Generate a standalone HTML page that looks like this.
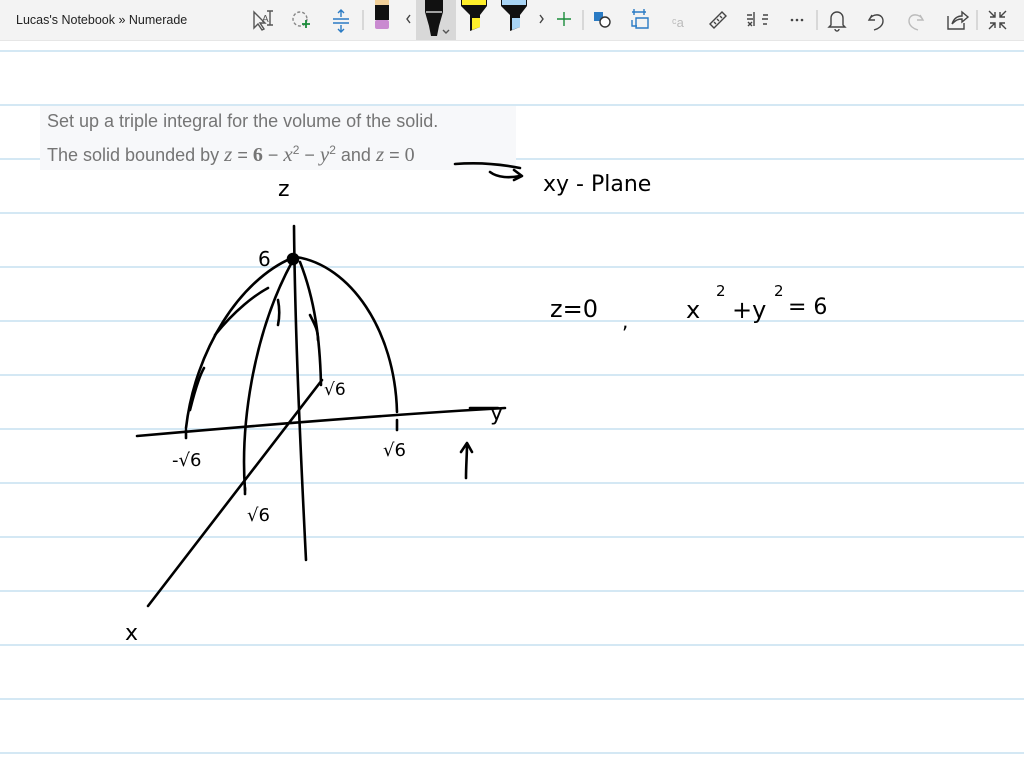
<!DOCTYPE html>
<html><head><meta charset="utf-8"><style>
html,body{margin:0;padding:0;width:1024px;height:768px;overflow:hidden;background:#fff;font-family:"Liberation Sans",sans-serif}
.tb{position:absolute;left:0;top:0;width:1024px;height:40px;background:#f3f3f3;border-bottom:1px solid #e6e6e6}
.title{position:absolute;left:16px;top:13px;font-size:12.5px;color:#222}
.line{position:absolute;left:0;width:1024px;height:2px;background:#d4e8f4}
.q{position:absolute;left:40px;top:106px;width:476px;height:64px;background:#f7f8fa;color:#757575;font-size:18px;line-height:29px;padding-left:7px;padding-top:1px;box-sizing:border-box}
.q i{font-family:"Liberation Serif",serif;font-size:21px}
</style></head><body>
<div class="tb">
<div class="title">Lucas's Notebook » Numerade</div>
<div style="position:absolute;left:416px;top:0;width:40px;height:40px;background:#d8d8d8"></div>
<svg width="1024" height="40" style="position:absolute;left:0;top:0" fill="none" stroke-width="1.4">
<path d="M254 12l0 16 4-4 4 6 2-1-4-6 5 0z" stroke="#555"/>
<text x="262" y="22" font-size="10" fill="#555" font-family="Liberation Sans">A</text>
<path d="M270 11v14M267 11h6M267 25h6" stroke="#555"/>
<circle cx="300" cy="19" r="7" stroke="#888" stroke-dasharray="3 2"/>
<path d="M302 24h8M306 20v8" stroke="#1a8c3a" stroke-width="1.8"/>
<path d="M333 19h16M333 23h16M341 10v7M338 13l3-3 3 3M341 25v7M338 29l3 3 3-3" stroke="#2a7bc4"/>
<path d="M363 10v20" stroke="#ccc"/>
<rect x="375" y="0" width="14" height="5" fill="#f2d19a" stroke="none"/>
<rect x="375" y="5" width="14" height="15" fill="#111" stroke="none"/>
<rect x="375" y="20" width="14" height="9" rx="2" fill="#c98ad0" stroke="none"/>
<path d="M410 15l-3 4 3 4" stroke="#444"/>
<path d="M425 0h18v12l-4 14-2 10h-6l-2-10-4-14z" fill="#111" stroke="none"/>
<path d="M426 12h16" stroke="#ddd"/>
<path d="M443 30l3 3 3-3" stroke="#555"/>
<path d="M461 0h26v6l-7 9v12l-10 4v-16l-9-9z" fill="#111" stroke="none"/>
<path d="M462 0h24v5h-24z" fill="#ffef2b" stroke="none"/>
<path d="M472 18h8v9l-8 3z" fill="#ffef2b" stroke="none"/>
<path d="M501 0h26v6l-7 9v12l-10 4v-16l-9-9z" fill="#111" stroke="none"/>
<path d="M502 0h24v5h-24z" fill="#a8d4f5" stroke="none"/>
<path d="M512 18h8v9l-8 3z" fill="#a8d4f5" stroke="none"/>
<path d="M540 15l3 4-3 4" stroke="#444"/>
<path d="M557 19h14M564 12v14" stroke="#1a8c3a"/>
<path d="M583 10v20" stroke="#ccc"/>
<rect x="594" y="12" width="9" height="9" fill="#2a7bc4" stroke="none"/>
<circle cx="605" cy="22" r="5" stroke="#333" fill="#fff"/>
<path d="M632 12h14M634 9v6M644 9v6M636 18h12v10h-12zM632 20v6h5" stroke="#2a7bc4"/>
<text x="672" y="27" font-size="13" fill="#bbb">ᶜa</text>
<path d="M710 24l12-12 4 4-12 12zM714 22l2 2M717 19l2 2M720 16l2 2" stroke="#444"/>
<path d="M754 12v14M747 19h6M762 19h6M747 15h5M763 15h5M748 22l4 4M752 22l-4 4M763 24h4" stroke="#444"/>
<circle cx="792" cy="20" r="1.3" fill="#444" stroke="none"/><circle cx="797" cy="20" r="1.3" fill="#444" stroke="none"/><circle cx="802" cy="20" r="1.3" fill="#444" stroke="none"/>
<path d="M817 10v20" stroke="#ccc"/>
<path d="M831 25v-7a6 6 0 0 1 12 0v7l2 2h-16zM835 29a2 2 0 0 0 4 0" stroke="#444"/>
<path d="M872 15l-3 5 6 0M869 20c3-7 14-7 14 1 0 5-5 8-9 9" stroke="#444"/>
<path d="M920 15l3 5-6 0M923 20c-3-7-14-7-14 1 0 5 5 8 9 9" stroke="#bbb"/>
<path d="M948 16v13h16v-6M952 24c2-6 6-8 10-8v-4l6 5-6 5v-3c-4 0-6 1-10 5" stroke="#444"/>
<path d="M977 10v20" stroke="#ccc"/>
<path d="M989 11l6 6M995 12v5h-5M1006 11l-6 6M1000 12v5h5M989 29l6-6M995 28v-5h-5M1006 29l-6-6M1000 28v-5h5" stroke="#444"/>
</svg>
</div>
<div class="line" style="top:50px"></div>
<div class="line" style="top:104px"></div>
<div class="line" style="top:158px"></div>
<div class="line" style="top:212px"></div>
<div class="line" style="top:266px"></div>
<div class="line" style="top:320px"></div>
<div class="line" style="top:374px"></div>
<div class="line" style="top:428px"></div>
<div class="line" style="top:482px"></div>
<div class="line" style="top:536px"></div>
<div class="line" style="top:590px"></div>
<div class="line" style="top:644px"></div>
<div class="line" style="top:698px"></div>
<div class="line" style="top:752px"></div>
<div class="q">Set up a triple integral for the volume of the solid.<br>The solid bounded by <i>z</i> = <b style="font-family:'Liberation Serif',serif;font-size:20px">6</b> − <i>x</i><sup style="font-size:12px">2</sup> − <i>y</i><sup style="font-size:12px">2</sup> and <i>z</i> = <span style="font-family:'Liberation Serif',serif;font-size:20px">0</span></div>
<svg width="1024" height="768" style="position:absolute;left:0;top:0" fill="none" stroke="#000" stroke-width="2.6" stroke-linecap="round" stroke-linejoin="round">
<path d="M294 226C295 330 300 440 306 560"/>
<path d="M137 436C250 426 400 414 505 408"/>
<path d="M148 606L322 380"/>
<path d="M186 428C195 350 240 280 292 258"/>
<path d="M296 257C350 265 395 330 397 412"/>
<path d="M292 262C255 330 240 420 245 490"/>
<path d="M300 262C315 300 320 340 321 385"/>
<path d="M190 410C195 390 200 375 204 368M215 335C235 310 255 295 268 288M278 300C280 310 279 320 278 325M310 315C315 325 318 330 318 340"/>
<circle cx="293" cy="259" r="5" fill="#000"/>
<path d="M470 408h28"/>
<path d="M466 478c0-12 1-24 1-34M461 452l6-9 5 9"/>
<path d="M455 164c25-2 45 0 65 4M490 172c8 6 20 6 30 4M514 170l8 6-8 4"/>
<path d="M397 420v10M186 430v8M245 488v6"/>
<g fill="#000" stroke="none" font-family="DejaVu Sans,Liberation Sans,sans-serif">
<text x="278" y="196" font-size="22">z</text>
<text x="258" y="266" font-size="20">6</text>
<text x="172" y="466" font-size="18">-√6</text>
<text x="383" y="456" font-size="18">√6</text>
<text x="324" y="395" font-size="17">√6</text>
<text x="247" y="521" font-size="18">√6</text>
<text x="490" y="420" font-size="22">y</text>
<text x="125" y="640" font-size="22">x</text>
<text x="543" y="191" font-size="22">xy - Plane</text>
<text x="550" y="317" font-size="24">z=0</text>
<text x="622" y="328" font-size="20">,</text>
<text x="686" y="318" font-size="24">x</text>
<text x="716" y="296" font-size="15">2</text>
<text x="732" y="318" font-size="24">+y</text>
<text x="774" y="296" font-size="15">2</text>
<text x="788" y="314" font-size="22">= 6</text>
</g>
</svg>
</body></html>
